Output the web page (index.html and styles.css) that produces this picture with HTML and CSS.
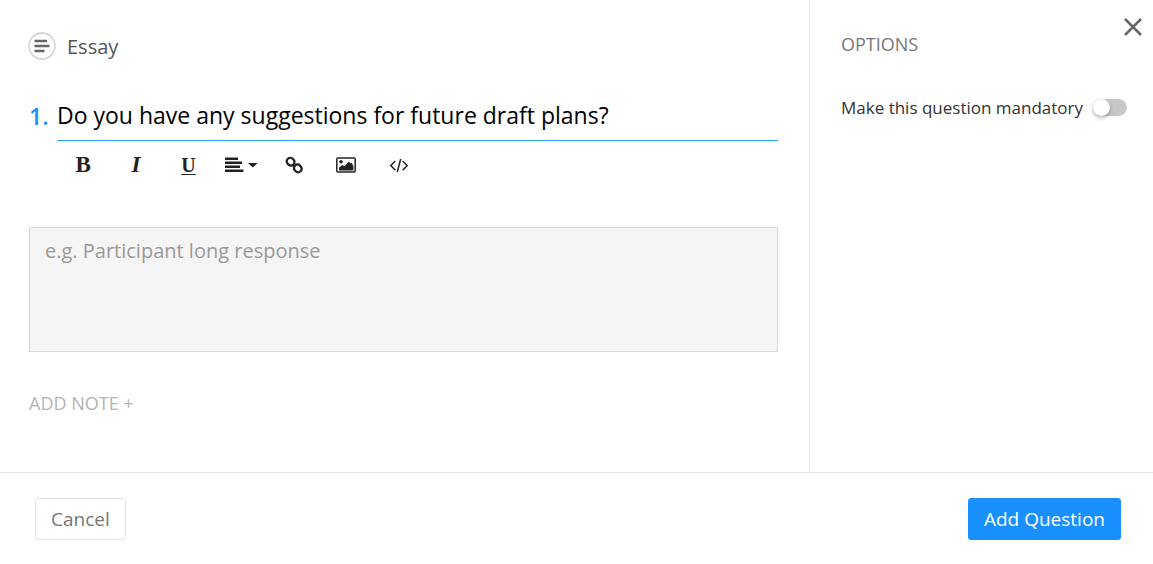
FILE: index.html
```html
<!DOCTYPE html>
<html lang="en">

<head>
    <meta charset="UTF-8">
    <meta name="viewport" content="width=device-width, initial-scale=1.0">
    <title>Add Question</title>
    <link rel="stylesheet" href="styles.css">
</head>

<body>
    <form class="question-form">
        <div class="content">
            <main class="editor">
                <div class="type">
                    <svg class="type-icon" width="28" height="28" viewBox="0 0 28 28" aria-hidden="true">
                        <circle cx="14" cy="14" r="13" fill="none" stroke="#ccc" stroke-width="1.3" />
                        <path d="M6.5 9h12.5M6.5 14h15M6.5 19h10" stroke="#666" stroke-width="2.5" />
                    </svg>
                    <span>Essay</span>
                </div>

                <div class="question">
                    <label class="number" for="question">1.</label>
                    <input class="question-text" id="question" type="text" value="Do you have any suggestions for future draft plans?">
                </div>

                <div class="toolbar">
                    <button type="button" class="tool bold" aria-label="Bold">B</button>
                    <button type="button" class="tool italic" aria-label="Italic">I</button>
                    <button type="button" class="tool underline" aria-label="Underline">U</button>
                    <button type="button" class="tool" aria-label="Align">
                        <svg width="34" height="20" viewBox="0 0 34 20" fill="#222">
                            <path d="M1 2.6h13v2.5H1zM1 6.6h17v2.5H1zM1 10.6h15v2.5H1zM1 14.6h18.4v2.5H1zM24 8h9.6l-4.8 4.6z" />
                        </svg>
                    </button>
                    <button type="button" class="tool" aria-label="Link">
                        <svg width="20" height="20" viewBox="0 0 20 20" fill="none" stroke="#222" stroke-width="2.3">
                            <rect x="2.6" y="3.2" width="8" height="7" rx="3.4" transform="rotate(45 6.6 6.7)" />
                            <rect x="9.8" y="9.9" width="8" height="7" rx="3.4" transform="rotate(45 13.8 13.4)" />
                        </svg>
                    </button>
                    <button type="button" class="tool" aria-label="Image">
                        <svg width="20" height="20" viewBox="0 0 20 20" fill="#222">
                            <rect x="0.8" y="3" width="18.4" height="14" rx="1" fill="none" stroke="#222" stroke-width="1.5" />
                            <circle cx="5" cy="6.8" r="1.8" />
                            <path d="M3 15.5v-3l3.4-2.6 2 1.3 4.6-4.6 1.6 1.8 1.2-.6 1.6 3.4v4.3z" />
                        </svg>
                    </button>
                    <button type="button" class="tool" aria-label="Code">
                        <svg width="20" height="20" viewBox="0 0 20 20" fill="none" stroke="#222" stroke-width="1.5">
                            <path d="M6.3 6L1.8 10.6l4.5 4.6M13.7 6l4.5 4.6-4.5 4.6M11.7 4L8.3 17" />
                        </svg>
                    </button>
                </div>

                <textarea class="response" placeholder="e.g. Participant long response" aria-label="Response" disabled></textarea>

                <button type="button" class="add-note">ADD NOTE +</button>
            </main>

            <aside class="options">
                <button type="button" class="close" aria-label="Close">
                    <svg width="20" height="20" viewBox="0 0 20 20" fill="none" stroke="#666" stroke-width="2.5">
                        <path d="M2 2l16 16M18 2L2 18" />
                    </svg>
                </button>
                <h2 class="options-title">OPTIONS</h2>
                <div class="option">
                    <label for="mandatory">Make this question mandatory</label>
                    <input class="toggle" id="mandatory" type="checkbox">
                </div>
            </aside>
        </div>

        <footer class="actions">
            <button type="button" class="btn">Cancel</button>
            <button type="submit" class="btn primary">Add Question</button>
        </footer>
    </form>
</body>

</html>
```

FILE: styles.css
```css
* {
    box-sizing: border-box;
}

body {
    margin: 0;
    background: #fff;
    font-family: "Open Sans", "Noto Sans", sans-serif;
    font-size: 18px;
    color: #333;
}

button {
    font: inherit;
    cursor: pointer;
}

svg {
    display: block;
}

.question-form {
    display: flex;
    flex-direction: column;
    min-height: 100vh;
}

.content {
    display: flex;
    flex: 1;
}

.editor {
    flex: 1;
    min-width: 0;
    padding: 32px 31px 32px 29px;
}

.type {
    display: flex;
    align-items: center;
    gap: 11px;
    height: 28px;
    margin-left: -1px;
    font-size: 20px;
    color: #555;
}

.question {
    display: flex;
    align-items: center;
    margin-top: 32px;
    font-size: 23px;
}

.number {
    width: 28px;
    padding-bottom: 2px;
    font-weight: 600;
    color: #1890ff;
}

.question-text {
    flex: 1;
    min-width: 0;
    height: 49px;
    padding: 0 0 2px;
    border: 0;
    border-bottom: 1px solid #29a3f5;
    outline: 0;
    background: none;
    font: inherit;
    color: #000;
}

.toolbar {
    display: flex;
    max-width: 368px;
    margin: 8px 0 0 28px;
}

.tool {
    display: flex;
    flex: 1;
    align-items: center;
    justify-content: center;
    height: 32px;
    padding: 0;
    border: 0;
    background: none;
    font-family: "Liberation Serif", serif;
    font-size: 23px;
    font-weight: bold;
    color: #222;
}

.italic {
    font-style: italic;
}

.underline {
    font-size: 20px;
    text-decoration: underline 1px;
    text-underline-offset: 2px;
}

.response {
    display: block;
    width: 100%;
    height: 125px;
    margin-top: 46px;
    padding: 9px 15px;
    border: 1px solid #d9d9d9;
    border-radius: 0;
    background: #f5f5f5;
    font: inherit;
    font-size: 20px;
    resize: none;
}

.response::placeholder {
    color: #999;
}

.add-note {
    margin-top: 39px;
    padding: 0;
    border: 0;
    background: none;
    color: #b3b3b3;
}

.options {
    position: relative;
    width: 344px;
    padding: 32px 26px 32px 31px;
    border-left: 1px solid #e8e8e8;
}

.close {
    position: absolute;
    top: 17px;
    right: 10px;
    padding: 0;
    border: 0;
    background: none;
}

.options-title {
    margin: 0;
    font-size: 18px;
    font-weight: normal;
    color: #777;
}

.option {
    display: flex;
    align-items: center;
    justify-content: space-between;
    margin-top: 39px;
    font-size: 17px;
    line-height: 25px;
    white-space: nowrap;
}

.toggle {
    appearance: none;
    flex: none;
    width: 34px;
    height: 17px;
    margin: 0;
    border-radius: 9px;
    background: #c8c8c8;
    cursor: pointer;
}

.toggle::before {
    content: "";
    display: block;
    width: 17px;
    height: 17px;
    border-radius: 50%;
    background: #fff;
    box-shadow: 0 2px 4px rgba(0, 0, 0, 0.3);
}

.toggle:checked {
    background: #1890ff;
}

.toggle:checked::before {
    margin-left: auto;
}

.actions {
    display: flex;
    align-items: center;
    justify-content: space-between;
    height: 92px;
    padding: 0 32px 0 35px;
    border-top: 1px solid #e5e5e5;
}

.btn {
    height: 42px;
    padding: 0 15px;
    border: 1px solid #e5e5e5;
    border-radius: 3px;
    background: #fff;
    font-size: 19px;
    color: #777;
}

.primary {
    border-color: #1890ff;
    background: #1890ff;
    color: #fff;
}
```
